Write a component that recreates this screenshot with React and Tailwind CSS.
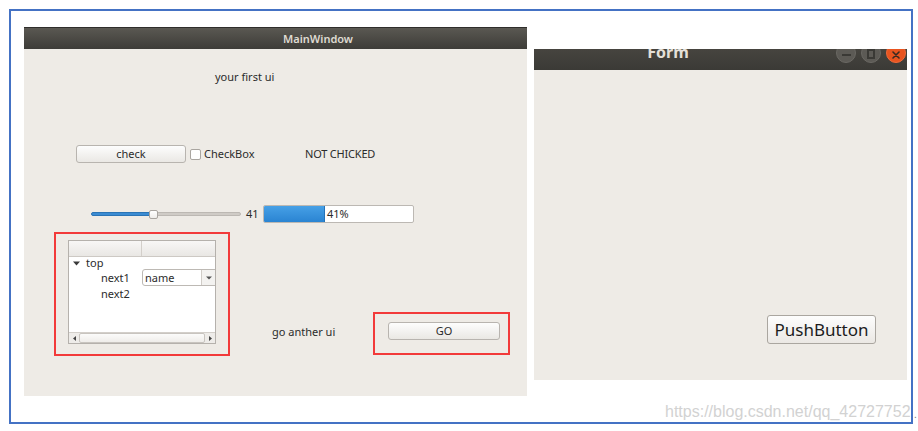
export default function App() {
  return (
    <div className="relative w-[918px] h-[431px] overflow-hidden bg-white pl-[9px] pt-[9px] font-['Noto_Sans',sans-serif] text-[#2b2b2b]">
      <div className="flex items-start w-[904px] h-[415px] border-2 border-[#4472c4] pl-[13px] pt-[16px]">
        {/* Main window */}
        <div className="flex flex-col w-[503px] h-[369px] bg-[#eeebe6]">
          <div className="flex h-[22px] items-center justify-center pl-[85px] bg-gradient-to-b from-[#5a5852] to-[#3d3c38] border-t border-[#2f2e2b]">
            <span className="text-[11px] font-semibold text-[#dfdbd2] leading-[14px]">MainWindow</span>
          </div>
          <div className="flex flex-col flex-1">
            <div className="pl-[191px] pt-[21px] text-[11px] leading-[14px]">your first ui</div>
            <div className="flex items-center mt-[61px] pl-[52px] h-[18px]">
              <div className="flex items-center justify-center w-[110px] h-[18px] rounded-[3px] border border-[#b8b4af] bg-gradient-to-b from-[#fdfdfd] to-[#eae8e4] text-[11px] leading-[14px]">check</div>
              <div className="flex items-center ml-[4px] w-[115px]">
                <div className="w-[11px] h-[11px] rounded-[2px] border border-[#a9a5a0] bg-white" />
                <span className="ml-[3px] text-[11px] leading-[14px]">CheckBox</span>
              </div>
              <span className="text-[11px] leading-[14px] tracking-[-0.2px]">NOT CHICKED</span>
            </div>
            <div className="flex items-center mt-[42px] pl-[67px] h-[18px]">
              <div className="relative flex items-center w-[150px] h-[9px]">
                <div className="w-[60px] h-[4px] rounded-l-[2px] bg-[#3a8bd2] border border-[#2a74b6]" />
                <div className="flex-1 h-[4px] rounded-r-[2px] bg-[#cfcbc6] border border-[#bcb8b3]" />
                <div className="absolute left-[58px] top-0 w-[9px] h-[9px] rounded-[2px] border border-[#a9a5a0] bg-gradient-to-b from-white to-[#efedea]" />
              </div>
              <span className="ml-[5px] w-[17px] text-[11px] leading-[14px]">41</span>
              <div className="flex items-center w-[151px] h-[18px] rounded-[2px] border border-[#bcb8b3] bg-white overflow-hidden">
                <div className="w-[61px] h-full bg-gradient-to-b from-[#46a0e6] to-[#2a84d2] border-r border-[#2472b8]" />
                <span className="ml-[2px] text-[11px] leading-[14px]">41%</span>
              </div>
            </div>
            <div className="flex items-start mt-[9px]">
              <div className="ml-[30px] w-[176px] h-[124px] border-2 border-[#f23a3a] pl-[12px] pt-[6px]">
                <div className="flex flex-col w-[148px] h-[104px] border border-[#b5b1ac] bg-white overflow-hidden">
                  <div className="flex h-[16px] shrink-0 border-b border-[#cdc9c4] bg-gradient-to-b from-[#f8f7f6] to-[#e9e7e4]">
                    <div className="w-[73px] h-full border-r border-[#d3cfca]" />
                    <div className="flex-1" />
                  </div>
                  <div className="flex items-center h-[12px] shrink-0 pl-[4px]">
                    <svg width="7" height="5" viewBox="0 0 7 5"><path d="M0 0.5 L7 0.5 L3.5 4.5 Z" fill="#3a3a3a" /></svg>
                    <span className="ml-[6px] text-[11px] leading-[14px]">top</span>
                  </div>
                  <div className="flex items-center h-[17px] shrink-0">
                    <span className="ml-[32px] w-[41px] shrink-0 text-[11px] leading-[14px]">next1</span>
                    <div className="flex items-center w-[90px] h-[17px] shrink-0 rounded-l-[3px] border border-[#bdb9b4] bg-white">
                      <span className="pl-[2px] w-[58px] shrink-0 text-[11px] leading-[14px]">name</span>
                      <div className="flex items-center justify-center w-[14px] h-full shrink-0 border-l border-[#d0ccc7] bg-[#f3f2f0]">
                        <svg width="6" height="4" viewBox="0 0 6 4"><path d="M0 0.5 L6 0.5 L3 3.5 Z" fill="#555" /></svg>
                      </div>
                    </div>
                  </div>
                  <div className="flex items-center h-[16px] shrink-0">
                    <span className="ml-[32px] text-[11px] leading-[14px]">next2</span>
                  </div>
                  <div className="flex-1" />
                  <div className="flex h-[11px] shrink-0 border-t border-[#d3cfca] bg-[#eeece9]">
                    <div className="flex items-center justify-center w-[10px] h-full">
                      <svg width="3" height="5" viewBox="0 0 3 5"><path d="M3 0 L0 2.5 L3 5 Z" fill="#444" /></svg>
                    </div>
                    <div className="flex-1 h-full rounded-[2px] border border-[#c8c4bf] bg-gradient-to-b from-[#fbfbfa] to-[#efedea]" />
                    <div className="flex items-center justify-center w-[10px] h-full">
                      <svg width="3" height="5" viewBox="0 0 3 5"><path d="M0 0 L3 2.5 L0 5 Z" fill="#444" /></svg>
                    </div>
                  </div>
                </div>
              </div>
              <span className="ml-[42px] mt-[93px] w-[101px] text-[11px] leading-[14px]">go anther ui</span>
              <div className="mt-[80px] w-[137px] h-[43px] border-2 border-[#f23a3a] pl-[13px] pt-[8px]">
                <div className="flex items-center justify-center w-[112px] h-[18px] rounded-[3px] border border-[#b8b4af] bg-gradient-to-b from-[#fdfdfd] to-[#eae8e4] text-[11px] leading-[14px]">GO</div>
              </div>
            </div>
          </div>
        </div>

        {/* Form window */}
        <div className="flex flex-col ml-[7px] mt-[22px] w-[373px] h-[331px] bg-[#eeebe6]">
          <div className="flex items-start h-[21px] shrink-0 overflow-hidden bg-gradient-to-b from-[#46443f] to-[#3b3a36]">
            <div className="flex justify-center w-[302px] pr-[34px]">
              <span className="mt-[-5px] text-[16px] font-bold leading-[16px] text-[#e4e0d8]">Form</span>
            </div>
            <div className="flex items-start gap-[5px] mt-[-6px]">
              <div className="flex items-center justify-center w-[20px] h-[20px] rounded-full bg-[#5c5a55] border border-[#6a6863]">
                <div className="w-[9px] h-[2px] bg-[#3a3935] mt-[4px]" />
              </div>
              <div className="flex items-center justify-center w-[20px] h-[20px] rounded-full bg-[#5c5a55] border border-[#6a6863]">
                <div className="w-[8px] h-[10px] border-2 border-[#3a3935] mt-[2px]" />
              </div>
              <div className="flex items-center justify-center w-[20px] h-[20px] rounded-full bg-[#e9541f] border border-[#f06a3a]">
                <svg width="8" height="8" viewBox="0 0 8 8" className="mt-[4px]">
                  <path d="M1 1 L7 7 M7 1 L1 7" stroke="#3a2a22" strokeWidth="1.6" strokeLinecap="round" />
                </svg>
              </div>
            </div>
          </div>
          <div className="flex-1 pl-[233px] pt-[245px]">
            <div className="flex items-center justify-center w-[109px] h-[29px] rounded-[3px] border border-[#aaa6a0] bg-gradient-to-b from-[#fdfdfd] to-[#ebe8e4] text-[17px] leading-[20px] text-[#1c1c1c]">PushButton</div>
          </div>
        </div>
      </div>

      <span className="absolute left-[665px] top-[404px] text-[16px] leading-[16px] font-['Liberation_Sans',sans-serif] text-[#d2d2d2]">https://blog.csdn.net/qq_42727752</span>
      <span className="absolute left-[914px] top-[410px] text-[10px] leading-[10px] font-['Liberation_Sans',sans-serif] text-[#777]">.</span>
    </div>
  );
}
